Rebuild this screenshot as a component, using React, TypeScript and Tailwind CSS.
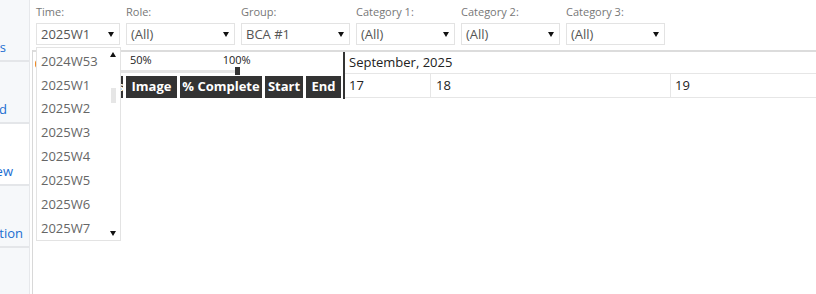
const FILTERS = [
  { label: 'Time:', value: '2025W1', width: 'w-[84px]' },
  { label: 'Role:', value: '(All)', width: 'w-[109px]' },
  { label: 'Group:', value: 'BCA #1', width: 'w-[109px]' },
  { label: 'Category 1:', value: '(All)', width: 'w-[99px]' },
  { label: 'Category 2:', value: '(All)', width: 'w-[99px]' },
  { label: 'Category 3:', value: '(All)', width: 'w-[99px]' },
];

const NAV = [
  { text: 'Gantt Analysis', cls: 'pr-[23px] bg-[#f6f8fa]' },
  { text: 'Data Grid', cls: 'pr-[22px] bg-[#f6f8fa]' },
  { text: 'Overview', cls: 'pr-[16px] bg-white' },
  { text: 'Presentation', cls: 'pr-[6px] bg-[#f6f8fa]' },
];

const WEEKS = ['2024W53', '2025W1', '2025W2', '2025W3', '2025W4', '2025W5', '2025W6', '2025W7'];

const COLUMNS = [
  { title: 'Tasks', width: 'w-[85px] justify-end -mr-[0px] overflow-hidden' },
  { title: 'Image', width: 'w-[51px] justify-center' },
  { title: '% Complete', width: 'w-[82px] justify-center' },
  { title: 'Start', width: 'w-[38px] justify-center' },
  { title: 'End', width: 'w-[35px] justify-center' },
];

function Caret() {
  return <span className="inline-block w-0 h-0 border-l-[3.5px] border-r-[3.5px] border-t-[5px] border-l-transparent border-r-transparent border-t-[#111]" />;
}

function CaretUp() {
  return <span className="inline-block w-0 h-0 border-l-[3.5px] border-r-[3.5px] border-b-[5px] border-l-transparent border-r-transparent border-b-[#111]" />;
}

export default function App() {
  return (
    <div className="relative flex w-[816px] h-[294px] overflow-hidden bg-white text-[13px]" style={{ fontFamily: '"Open Sans", "Noto Sans", sans-serif' }}>
      {/* Side navigation, scrolled so only word endings show */}
      <div className="w-[30px] shrink-0 bg-[#f6f8fa] border-r border-[#e6e8eb] overflow-hidden">
        {NAV.map((item) => (
          <div key={item.text} className={`h-[62px] flex items-end justify-end pb-[3px] border-b-2 border-[#e4e6e9] whitespace-nowrap text-[#1b6ed1] ${item.cls}`}>
            {item.text}
          </div>
        ))}
      </div>

      <div className="flex-1 flex flex-col min-w-0">
        {/* Filter bar */}
        <div className="h-[50px] flex gap-[6px] pl-[6px] pt-[4px]">
          {FILTERS.map((f) => (
            <div key={f.label} className="flex flex-col">
              <span className="text-[11px] leading-[16px] text-[#777] h-[19px]">{f.label}</span>
              <div className={`${f.width} h-[22px] border border-[#e3e3e3] flex items-center justify-between pl-[4px] pr-[5px] text-[#555] leading-none`}>
                <span>{f.value}</span>
                <Caret />
              </div>
            </div>
          ))}
        </div>

        {/* Gantt */}
        <div className="flex-1 ml-[2px] border-l border-[#d8d8d8]">
          <div className="flex border-t-2 border-[#dcdcdc]">
            {/* Task grid */}
            <div className="w-[312px] shrink-0 border-r-2 border-[#333] overflow-hidden">
              <div className="h-[23px] flex items-center pl-[2px]">
                <span className="w-[3px] h-[8px] rounded-l-full border border-[#f08a24] mr-[4px]" />
                <div className="w-[200px] h-[23px]">
                  <div className="flex text-[11px] text-[#222] leading-[14px] pt-[1px]">
                    <span className="ml-[88px]">50%</span>
                    <span className="ml-[71px]">100%</span>
                  </div>
                  <div className="flex items-center">
                    <div className="w-[195px] h-[3px] bg-[#e4e4e4]" />
                    <div className="w-[5px] h-[8px] bg-[#333] -ml-[2px]" />
                  </div>
                </div>
              </div>
              <div className="flex gap-[3px] pl-[5px] pb-[1px] pt-[1px]">
                {COLUMNS.map((c) => (
                  <div key={c.title} className={`${c.width} h-[22px] shrink-0 bg-[#333] text-white font-bold flex items-center whitespace-nowrap`}>
                    {c.title === 'Tasks' ? <span className="-mr-[1px]">{c.title}</span> : c.title}
                  </div>
                ))}
              </div>
            </div>

            {/* Timeline */}
            <div className="flex-1 min-w-0">
              <div className="h-[22px] flex items-center pl-[4px] border-b border-[#e6e6e6] text-[#222]">September, 2025</div>
              <div className="flex h-[24px] border-b border-[#e6e6e6] text-[#222]">
                <div className="w-[86px] border-r border-[#e6e6e6] pl-[4px] flex items-center">17</div>
                <div className="w-[240px] border-r border-[#e6e6e6] pl-[5px] flex items-center">18</div>
                <div className="flex-1 pl-[4px] flex items-center">19</div>
              </div>
            </div>
          </div>
        </div>
      </div>

      {/* Open Time dropdown */}
      <div className="absolute left-[36px] top-[47px] w-[85px] h-[194px] bg-white border border-[#e3e3e3] flex">
        <div className="flex-1 flex flex-col pl-[4px] pt-[1px] text-[#666]">
          {WEEKS.map((w) => (
            <div key={w} className="h-[24.2px] flex items-center pt-[1px]">{w}</div>
          ))}
        </div>
        <div className="w-[10px] flex flex-col items-center pt-[4px] pb-[4px] mr-[2px]">
          <CaretUp />
          <div className="w-[5px] h-[15px] bg-[#e6e6e6] mt-[31px]" />
          <div className="flex-1" />
          <Caret />
        </div>
      </div>
    </div>
  );
}
